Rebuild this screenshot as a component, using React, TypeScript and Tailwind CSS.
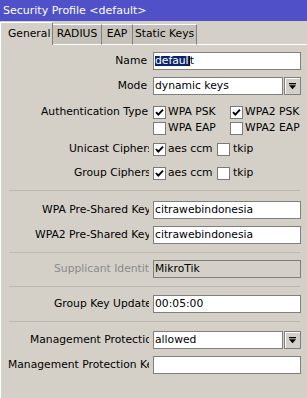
import React from "react";

const Check = () => (
  <svg width="11" height="11" viewBox="0 0 11 11" className="block">
    <path d="M2 5.2 L4.3 7.6 L9 2.6" fill="none" stroke="#000" strokeWidth="1.9" />
  </svg>
);

const Box = ({ checked }: { checked?: boolean }) => (
  <div className="w-[13px] h-[13px] box-border border border-[#7a7a7a] bg-white flex items-center justify-center shrink-0">
    {checked ? <Check /> : null}
  </div>
);

const Label = ({
  text,
  pl,
  gray,
}: {
  text: string;
  pl?: string;
  gray?: boolean;
}) => (
  <div
    className={
      "ml-[8px] w-[141px] overflow-hidden whitespace-nowrap shrink-0 " +
      (pl ? pl + " text-left " : "text-right pr-[2px] ") +
      (gray ? "text-[#8a8a8a]" : "text-black")
    }
  >
    {text}
  </div>
);

const DropIcon = () => (
  <svg width="7" height="7" viewBox="0 0 7 7" className="block">
    <rect x="0" y="0" width="7" height="1.3" fill="#000" />
    <path d="M0 2.3 L7 2.3 L3.5 6.3 Z" fill="#000" />
  </svg>
);

const Select = ({ value }: { value: string }) => (
  <div className="flex ml-[4px] w-[148px] h-[18px]">
    <div className="w-[130px] h-full box-border border border-[#7f7f7f] bg-white pl-[1px] flex items-center whitespace-nowrap overflow-hidden">
      {value}
    </div>
    <div className="ml-[1px] w-[17px] h-full box-border border border-[#7f7f7f] bg-[#d4d0c8] shadow-[inset_1px_1px_0_#ffffff] flex items-center justify-center">
      <DropIcon />
    </div>
  </div>
);

const Input = ({ children, ro }: { children?: React.ReactNode; ro?: boolean }) => (
  <div
    className={
      "ml-[4px] w-[148px] h-[18px] box-border border border-[#7f7f7f] pl-[1px] flex items-center whitespace-nowrap overflow-hidden " +
      (ro ? "bg-[#d4d0c8]" : "bg-white")
    }
  >
    {children}
  </div>
);

const Sep = ({ mt }: { mt: string }) => (
  <div className={"ml-[8px] w-[291px] h-px bg-[#bcb8b0] " + mt} />
);

export default function App() {
  return (
    <div className="w-[307px] h-[398px] bg-[#d4d0c8] font-['DejaVu_Sans',sans-serif] text-[10.75px] leading-none text-black overflow-hidden flex flex-col">
      <div className="h-[21px] bg-[#5050c8] text-white text-[11px] pl-[3px] flex items-center shrink-0">
        Security Profile &lt;default&gt;
      </div>
      <div className="h-[24px] flex items-end shrink-0">
        <div className="w-[53px] h-[23px] box-border border-t border-l border-r border-t-white border-l-white border-r-[#808080] bg-[#d4d0c8] pl-[7px] pt-[6px]">
          General
        </div>
        <div className="w-[49px] h-[21px] box-border border-t border-r border-b border-t-white border-r-[#808080] border-b-white bg-[#c6c2ba] flex items-center justify-center">
          RADIUS
        </div>
        <div className="w-[31px] h-[21px] box-border border-t border-r border-b border-t-white border-r-[#808080] border-b-white bg-[#c6c2ba] flex items-center justify-center">
          EAP
        </div>
        <div className="w-[64px] h-[21px] box-border border-t border-r border-b border-t-white border-r-[#808080] border-b-white bg-[#c6c2ba] flex items-center justify-center">
          Static Keys
        </div>
        <div className="flex-1 h-px bg-white" />
      </div>
      <div className="flex-1 border-l border-white flex flex-col">
        <div className="flex items-center mt-[7px] h-[18px] -ml-px">
          <Label text="Name" />
          <Input>
            <span className="bg-[#0a246a] text-white">defaul</span>
            <span className="border-l border-black">t</span>
          </Input>
        </div>
        <div className="flex items-center mt-[7px] h-[18px] -ml-px">
          <Label text="Mode" />
          <Select value="dynamic keys" />
        </div>
        <div className="flex mt-[11px] -ml-px">
          <div className="h-[13px] flex items-center">
            <Label text="Authentication Type" pl="pl-[33px]" />
          </div>
          <div className="ml-[4px] flex flex-col gap-[3px]">
            <div className="flex h-[13px] items-center">
              <div className="w-[77px] flex items-center gap-[2px]">
                <Box checked />
                <span>WPA PSK</span>
              </div>
              <div className="flex items-center gap-[2px]">
                <Box checked />
                <span>WPA2 PSK</span>
              </div>
            </div>
            <div className="flex h-[13px] items-center">
              <div className="w-[77px] flex items-center gap-[2px]">
                <Box />
                <span>WPA EAP</span>
              </div>
              <div className="flex items-center gap-[2px]">
                <Box />
                <span>WPA2 EAP</span>
              </div>
            </div>
          </div>
        </div>
        <div className="flex items-center mt-[8px] h-[13px] -ml-px">
          <Label text="Unicast Ciphers" pl="pl-[61px]" />
          <div className="ml-[4px] flex items-center">
            <div className="w-[64px] flex items-center gap-[2px]">
              <Box checked />
              <span>aes ccm</span>
            </div>
            <div className="flex items-center gap-[3px]">
              <Box />
              <span>tkip</span>
            </div>
          </div>
        </div>
        <div className="flex items-center mt-[11px] h-[13px] -ml-px">
          <Label text="Group Ciphers" pl="pl-[66px]" />
          <div className="ml-[4px] flex items-center">
            <div className="w-[64px] flex items-center gap-[2px]">
              <Box checked />
              <span>aes ccm</span>
            </div>
            <div className="flex items-center gap-[3px]">
              <Box />
              <span>tkip</span>
            </div>
          </div>
        </div>
        <Sep mt="mt-[10px] -ml-px" />
        <div className="flex items-center mt-[10px] h-[18px] -ml-px">
          <Label text="WPA Pre-Shared Key" pl="pl-[34px]" />
          <Input>citrawebindonesia</Input>
        </div>
        <div className="flex items-center mt-[7px] h-[18px] -ml-px">
          <Label text="WPA2 Pre-Shared Key" pl="pl-[27px]" />
          <Input>citrawebindonesia</Input>
        </div>
        <Sep mt="mt-[8px] -ml-px" />
        <div className="flex items-center mt-[7px] h-[18px] -ml-px">
          <Label text="Supplicant Identity" pl="pl-[46px]" gray />
          <Input ro>MikroTik</Input>
        </div>
        <Sep mt="mt-[8px] -ml-px" />
        <div className="flex items-center mt-[8px] h-[18px] -ml-px">
          <Label text="Group Key Update" pl="pl-[46px]" />
          <Input>00:05:00</Input>
        </div>
        <Sep mt="mt-[8px] -ml-px" />
        <div className="flex items-center mt-[9px] h-[18px] -ml-px">
          <Label text="Management Protection" pl="pl-[22px]" />
          <Select value="allowed" />
        </div>
        <div className="flex items-center mt-[7px] h-[18px] -ml-px">
          <Label text="Management Protection Key" pl="pl-[0px]" />
          <Input />
        </div>
      </div>
    </div>
  );
}
